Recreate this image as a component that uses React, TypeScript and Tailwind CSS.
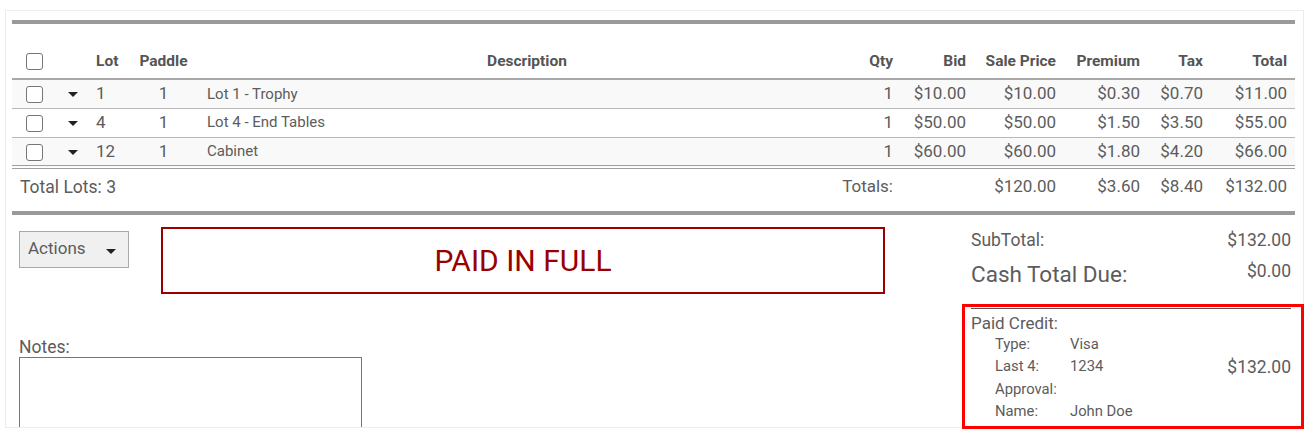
const lots = [
  { lot: "1", paddle: "1", desc: "Lot 1 - Trophy", qty: "1", bid: "$10.00", sale: "$10.00", premium: "$0.30", tax: "$0.70", total: "$11.00" },
  { lot: "4", paddle: "1", desc: "Lot 4 - End Tables", qty: "1", bid: "$50.00", sale: "$50.00", premium: "$1.50", tax: "$3.50", total: "$55.00" },
  { lot: "12", paddle: "1", desc: "Cabinet", qty: "1", bid: "$60.00", sale: "$60.00", premium: "$1.80", tax: "$4.20", total: "$66.00" },
]

const credit = [
  { label: "Type:", value: "Visa" },
  { label: "Last 4:", value: "1234" },
  { label: "Approval:", value: "" },
  { label: "Name:", value: "John Doe" },
]

function Box() {
  return <span className="inline-block h-[17px] w-[17px] rounded-[3px] border border-[#767676] bg-white align-middle" />
}

function Caret() {
  return <span className="inline-block h-0 w-0 border-x-[5px] border-t-[5px] border-x-transparent border-t-[#222] align-middle" />
}

export default function App() {
  return (
    <div className="h-[442px] w-[1315px] bg-white pt-[10px] pl-[5px] text-[#5c5c5c]" style={{ fontFamily: "Roboto, 'Liberation Sans', sans-serif" }}>
      <div className="h-[418px] w-[1299px] border border-[#ececec] px-[6px]">
        <div className="mt-[9px] h-[4px] w-[1283px] bg-[#9a9a9a]" />

        <table className="mt-[21px] w-[1283px] table-fixed border-collapse">
          <colgroup>
            <col className="w-[45px]" />
            <col className="w-[31px]" />
            <col className="w-[42px]" />
            <col className="w-[67px]" />
            <col className="w-[660px]" />
            <col className="w-[44px]" />
            <col className="w-[73px]" />
            <col className="w-[90px]" />
            <col className="w-[84px]" />
            <col className="w-[63px]" />
            <col className="w-[84px]" />
          </colgroup>
          <thead>
            <tr className="h-[34px] border-b-2 border-[#a8a8a8] text-[15.5px] font-bold text-[#555]">
              <th className="text-center"><Box /></th>
              <th />
              <th className="px-2 text-left">Lot</th>
              <th className="text-center">Paddle</th>
              <th className="text-center">Description</th>
              <th className="px-2 text-right">Qty</th>
              <th className="px-2 text-right">Bid</th>
              <th className="px-2 text-right">Sale Price</th>
              <th className="px-2 text-right">Premium</th>
              <th className="px-2 text-right">Tax</th>
              <th className="px-2 text-right">Total</th>
            </tr>
          </thead>
          <tbody>
            {lots.map((row, i) => (
              <tr
                key={row.lot}
                className={
                  i === lots.length - 1
                    ? "h-[30px] border-b-[4px] border-double border-[#a0a0a0] bg-[#f9f9f9] text-[17px]"
                    : i % 2 === 0
                      ? "h-[29px] border-b border-[#b8b8b8] bg-[#f9f9f9] text-[17px]"
                      : "h-[29px] border-b border-[#b8b8b8] bg-white text-[17px]"
                }
              >
                <td className="text-center"><Box /></td>
                <td className="text-center"><Caret /></td>
                <td className="px-2 text-left">{row.lot}</td>
                <td className="text-center">{row.paddle}</td>
                <td className="px-[10px] text-left text-[15px]">{row.desc}</td>
                <td className="px-2 text-right">{row.qty}</td>
                <td className="px-2 text-right">{row.bid}</td>
                <td className="px-2 text-right">{row.sale}</td>
                <td className="px-2 text-right">{row.premium}</td>
                <td className="px-2 text-right">{row.tax}</td>
                <td className="px-2 text-right">{row.total}</td>
              </tr>
            ))}
            <tr className="h-[38px] text-[17px]">
              <td colSpan={5} className="px-2 text-left text-[17.5px]">Total Lots: 3</td>
              <td className="px-2">
                <div className="flex justify-end whitespace-nowrap">Totals:</div>
              </td>
              <td />
              <td className="px-2 text-right">$120.00</td>
              <td className="px-2 text-right">$3.60</td>
              <td className="px-2 text-right">$8.40</td>
              <td className="px-2 text-right">$132.00</td>
            </tr>
          </tbody>
        </table>

        <div className="mt-[6px] h-[4px] w-[1283px] bg-[#9a9a9a]" />

        <div className="flex">
          <div className="flex-1 pl-[7px]">
            <div className="flex items-start">
              <button className="mt-[16px] flex h-[37px] w-[110px] items-start justify-between border border-[#a9a9a9] bg-[#f0f0f0] pt-[4px] pr-[12px] pl-[8px] text-[17px] text-[#5c5c5c]">
                <span>Actions</span>
                <span className="mt-[2px]"><Caret /></span>
              </button>
              <div className="mt-[12px] ml-[32px] flex h-[67px] w-[724px] items-center justify-center border-2 border-[#9b0000] text-[30px] text-[#990000]">
                PAID IN FULL
              </div>
            </div>
            <div className="mt-[44px] text-[17.5px] leading-[19px]">Notes:</div>
            <div className="h-[70px] w-[343px] border border-b-0 border-[#767676]" />
          </div>

          <div className="-mr-[7px] w-[342px]">
            <div className="flex justify-between pt-[15px] pr-[13px] pl-[9px] text-[17.5px] leading-[21px]">
              <span>SubTotal:</span>
              <span>$132.00</span>
            </div>
            <div className="mt-[10px] flex justify-between pr-[13px] pl-[9px]">
              <span className="text-[22.5px] leading-[26px]">Cash Total Due:</span>
              <span className="text-[17.5px] leading-[21px]">$0.00</span>
            </div>
            <div className="mt-[17px] h-[125px] border-[3px] border-[#ff0000] pt-[1px] pr-[10px] pl-[6px]">
              <div className="border-t border-[#555]" />
              <div className="mt-[4px] text-[17px] leading-[20px]">Paid Credit:</div>
              <div className="flex items-center justify-between">
                <div className="pl-[24px] text-[14.8px] leading-[22.3px]">
                  {credit.map((c) => (
                    <div key={c.label} className="flex">
                      <span className="w-[75px]">{c.label}</span>
                      <span>{c.value}</span>
                    </div>
                  ))}
                </div>
                <span className="-mt-[20px] text-[17.5px]">$132.00</span>
              </div>
            </div>
          </div>
        </div>
      </div>
    </div>
  )
}
